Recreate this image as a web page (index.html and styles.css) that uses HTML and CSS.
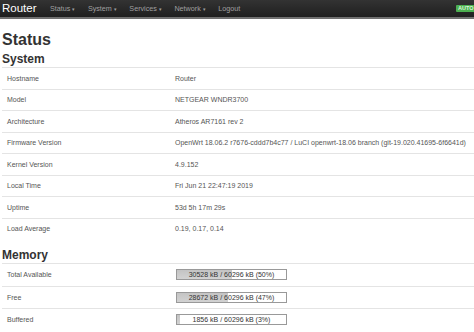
FILE: index.html
```html
<!DOCTYPE html>
<html>
<head>
<meta charset="utf-8">
<link rel="stylesheet" href="styles.css">
</head>
<body>
<header class="topbar">
  <a class="brand">Router</a>
  <nav class="menu">
    <span class="item">Status <span class="caret">▾</span></span>
    <span class="item">System <span class="caret">▾</span></span>
    <span class="item">Services <span class="caret">▾</span></span>
    <span class="item">Network <span class="caret">▾</span></span>
    <span class="item">Logout</span>
  </nav>
  <span class="badge">AUTO</span>
</header>
<main class="content">
  <h1 class="title">Status</h1>
  <h2 class="section">System</h2>
  <table class="info">
    <tr><td class="key">Hostname</td><td>Router</td></tr>
    <tr><td class="key">Model</td><td>NETGEAR WNDR3700</td></tr>
    <tr><td class="key">Architecture</td><td>Atheros AR7161 rev 2</td></tr>
    <tr><td class="key">Firmware Version</td><td>OpenWrt 18.06.2 r7676-cddd7b4c77 / LuCI openwrt-18.06 branch (git-19.020.41695-6f6641d)</td></tr>
    <tr><td class="key">Kernel Version</td><td>4.9.152</td></tr>
    <tr><td class="key">Local Time</td><td>Fri Jun 21 22:47:19 2019</td></tr>
    <tr><td class="key">Uptime</td><td>53d 5h 17m 29s</td></tr>
    <tr><td class="key">Load Average</td><td>0.19, 0.17, 0.14</td></tr>
  </table>
  <h2 class="section memory">Memory</h2>
  <table class="info mem">
    <tr><td class="key">Total Available</td><td><div class="bar"><div class="fill" style="width:50%"></div><span class="label">30528 kB / 60296 kB (50%)</span></div></td></tr>
    <tr><td class="key">Free</td><td><div class="bar"><div class="fill" style="width:47%"></div><span class="label">28672 kB / 60296 kB (47%)</span></div></td></tr>
    <tr><td class="key">Buffered</td><td><div class="bar"><div class="fill" style="width:3%"></div><span class="label">1856 kB / 60296 kB (3%)</span></div></td></tr>
  </table>
</main>
</body>
</html>
```
FILE: styles.css
```css
html, body {
  margin: 0;
  padding: 0;
  background: #fff;
  font-family: "Liberation Sans", Arial, sans-serif;
  overflow: hidden;
}
.topbar {
  height: 17px;
  background: linear-gradient(#333, #1f1f1f);
  border-bottom: 2px solid #707070;
  display: flex;
  align-items: center;
  padding: 0 0 0 2px;
}
.brand {
  color: #fff;
  font-size: 11.5px;
  width: 48px;
  line-height: 17px;
}
.menu {
  display: flex;
  gap: 12.5px;
  font-size: 7.2px;
  color: #a0a0a0;
  flex: 1;
}
.caret { font-size: 5px; }
.badge {
  background: #4caf50;
  color: #d8f5d8;
  font-size: 5.5px;
  font-weight: bold;
  line-height: 7px;
  padding: 0 2px;
  width: 14px;
  overflow: hidden;
  white-space: nowrap;
  border-radius: 1px 0 0 1px;
}
.content {
  padding: 0 0 0 2px;
}
.title {
  font-size: 16px;
  font-weight: bold;
  color: #333;
  margin: 11px 0 0;
  line-height: 20px;
}
.section {
  font-size: 12px;
  font-weight: bold;
  color: #333;
  margin: 1px 0 0;
  line-height: 16px;
}
.section.memory {
  margin-top: 8px;
}
.info {
  width: 100%;
  table-layout: fixed;
  border-collapse: collapse;
  margin-top: 0;
  font-size: 7px;
  color: #555;
}
.info td {
  border-top: 1px solid #e4e4e4;
  height: 20.5px;
  padding: 0 0 0 5px;
  vertical-align: middle;
  white-space: nowrap;
  overflow: visible;
}
.info.mem td {
  height: 21.5px;
}
.info td.key {
  width: 163px;
}
.bar {
  position: relative;
  width: 109px;
  height: 9px;
  border: 1px solid #999;
  background: #fff;
  margin-left: 1px;
}
.fill {
  height: 100%;
  background: linear-gradient(#c4c4c4, #d2d2d2);
}
.label {
  position: absolute;
  inset: 0;
  text-align: center;
  font-size: 7px;
  line-height: 9px;
  color: #333;
}
```
